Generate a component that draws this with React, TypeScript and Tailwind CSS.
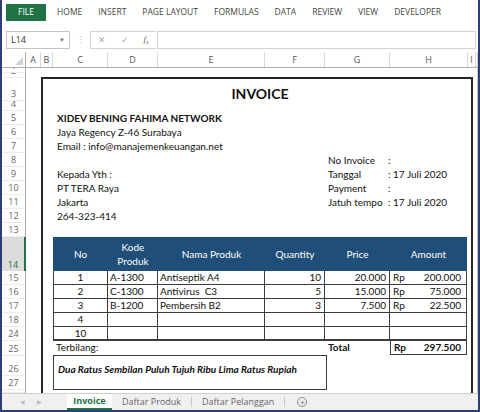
import React from 'react';

const ui = "font-['Open_Sans',sans-serif]";
const cal = "font-['Lato',sans-serif]";

const ribbonTabs = ['HOME', 'INSERT', 'PAGE LAYOUT', 'FORMULAS', 'DATA', 'REVIEW', 'VIEW', 'DEVELOPER'];

const colHeads = [
  { n: 'A', cls: 'w-[15px]' },
  { n: 'B', cls: 'w-[12px]' },
  { n: 'C', cls: 'w-[55px]' },
  { n: 'D', cls: 'w-[50px]' },
  { n: 'E', cls: 'w-[107px]' },
  { n: 'F', cls: 'w-[60px]' },
  { n: 'G', cls: 'w-[65px]' },
  { n: 'H', cls: 'w-[78px]' },
  { n: 'I', cls: 'w-[8px]' },
];

const rowHeads = [
  { n: '1', cls: 'h-[5px]' },
  { n: '2', cls: 'h-[5px]' },
  { n: '3', cls: 'h-[23px]' },
  { n: '4', cls: 'h-[10px]' },
  { n: '5', cls: 'h-[14px]' },
  { n: '6', cls: 'h-[14px]' },
  { n: '7', cls: 'h-[14px]' },
  { n: '8', cls: 'h-[14px]' },
  { n: '9', cls: 'h-[14px]' },
  { n: '10', cls: 'h-[14px]' },
  { n: '11', cls: 'h-[14px]' },
  { n: '12', cls: 'h-[14px]' },
  { n: '13', cls: 'h-[14px]' },
  { n: '14', cls: 'h-[34px]', active: true },
  { n: '15', cls: 'h-[14px]' },
  { n: '16', cls: 'h-[14px]' },
  { n: '17', cls: 'h-[14px]' },
  { n: '18', cls: 'h-[14px]' },
  { n: '24', cls: 'h-[14px]' },
  { n: '25', cls: 'h-[15px]' },
  { n: '26', cls: 'h-[20px]' },
  { n: '27', cls: 'h-[14px]' },
  { n: '28', cls: 'flex-1' },
];

const items = [
  { no: '1', kode: 'A-1300', nama: 'Antiseptik A4', qty: '10', price: '20.000', amount: '200.000' },
  { no: '2', kode: 'C-1300', nama: 'Antivirus  C3', qty: '5', price: '15.000', amount: '75.000' },
  { no: '3', kode: 'B-1200', nama: 'Pembersih B2', qty: '3', price: '7.500', amount: '22.500' },
  { no: '4', kode: '', nama: '', qty: '', price: '', amount: '' },
  { no: '10', kode: '', nama: '', qty: '', price: '', amount: '' },
];

function Ribbon() {
  return (
    <div className={`h-[25px] flex items-center pl-[4px] ${ui}`}>
      <div className="w-[40px] h-[17px] bg-[#217346] text-white text-[8.5px] flex items-center justify-center">FILE</div>
      <div className="flex items-center gap-[16px] ml-[11px] text-[8.5px] text-[#444]">
        {ribbonTabs.map((t) => (
          <span key={t}>{t}</span>
        ))}
      </div>
    </div>
  );
}

function FormulaBar() {
  return (
    <div className={`h-[27px] flex items-center pl-[4px] pr-[2px] pt-[3px] ${ui}`}>
      <div className="w-[64px] h-[18px] border border-[#c6c6c6] flex items-center justify-between px-[4px] text-[9px] text-[#333]">
        <span>L14</span>
        <span className="text-[6px] text-[#777]">▼</span>
      </div>
      <div className="w-[20px] flex justify-center text-[9px] text-[#bbb]">⋮</div>
      <div className="w-[66px] h-[18px] border border-r-0 border-[#d4d4d4] flex items-center justify-around text-[9px] text-[#aaa]">
        <span>✕</span>
        <span>✓</span>
        <span className="italic font-['Liberation_Serif',serif] text-[#666]">f<sub className="text-[6px]">x</sub></span>
      </div>
      <div className="flex-1 h-[18px] border border-[#d4d4d4] ml-[1px]"></div>
    </div>
  );
}

function RowHeaders() {
  return (
    <div className={`w-[24px] flex flex-col border-r border-[#ababab] ${ui}`}>
      <div className="h-[16px] border-b border-[#ababab] flex items-end justify-end pr-[2px] pb-[2px]">
        <div className="w-0 h-0 border-l-[8px] border-l-transparent border-b-[8px] border-b-[#d0d0d0]"></div>
      </div>
      {rowHeads.map((r) =>
        r.active ? (
          <div
            key={r.n}
            className={`${r.cls} bg-[#dcdcdc] border-r-2 border-[#217346] -mr-[1px] flex items-end justify-center pb-[1px] text-[9px] leading-[11px] text-[#217346] overflow-hidden`}
          >
            {r.n}
          </div>
        ) : (
          <div
            key={r.n}
            className={`${r.cls} flex items-end justify-center pb-[1px] text-[9px] leading-[11px] text-[#666] overflow-hidden border-b border-[#ececec]`}
          >
            {r.n}
          </div>
        ),
      )}
    </div>
  );
}

function ColHeaders() {
  return (
    <div className={`h-[16px] flex border-b border-[#ababab] ${ui}`}>
      {colHeads.map((c) => (
        <div
          key={c.n}
          className={`${c.cls} shrink-0 flex items-center justify-center text-[9px] text-[#555] border-r border-[#dadada]`}
        >
          {c.n}
        </div>
      ))}
    </div>
  );
}

function InfoRow({ left, label, value, bold }: { left?: string; label?: string; value?: string; bold?: boolean }) {
  return (
    <div className="h-[14px] flex items-center leading-[14px]">
      <div className={`w-[272px] pl-[4px] whitespace-nowrap ${bold ? 'font-bold' : ''}`}>{left}</div>
      <div className="w-[63px] pl-[3px] whitespace-nowrap">{label}</div>
      <div className="whitespace-pre">{value}</div>
    </div>
  );
}

function InvoiceTable() {
  const line = 'border-[#3c3c3c]';
  return (
    <div className="w-[414px]">
      <div className="h-[34px] bg-[#1f4e78] text-white flex items-center text-center leading-[14px]">
        <div className="w-[55px]">No</div>
        <div className="w-[50px]">
          Kode
          <br />
          Produk
        </div>
        <div className="w-[107px]">Nama Produk</div>
        <div className="w-[60px]">Quantity</div>
        <div className="w-[65px]">Price</div>
        <div className="w-[77px]">Amount</div>
      </div>
      {items.map((it, i) => (
        <div
          key={it.no}
          className={`h-[14px] flex leading-[13px] border-l border-r ${line} ${i === items.length - 1 ? 'border-b-2' : 'border-b'}`}
        >
          <div className={`w-[54px] text-center border-r ${line}`}>{it.no}</div>
          <div className={`w-[50px] pl-[2px] border-r ${line}`}>{it.kode}</div>
          <div className={`w-[107px] pl-[2px] whitespace-pre border-r ${line}`}>{it.nama}</div>
          <div className={`w-[60px] text-right pr-[3px] border-r ${line}`}>{it.qty}</div>
          <div className={`w-[65px] text-right pr-[3px] border-r ${line}`}>{it.price}</div>
          <div className="flex-1 flex justify-between pl-[3px] pr-[5px]">
            <span>{it.amount ? 'Rp' : ''}</span>
            <span>{it.amount}</span>
          </div>
        </div>
      ))}
      <div className="h-[14px] flex leading-[13px]">
        <div className="w-[272px] pl-[3px]">Terbilang:</div>
        <div className="w-[65px] pl-[3px] font-bold">Total</div>
        <div className={`flex-1 h-[14px] border-l border-r border-b ${line} flex justify-between pl-[3px] pr-[5px] font-bold`}>
          <span>Rp</span>
          <span>297.500</span>
        </div>
      </div>
      <div className={`w-[274px] h-[35px] border ${line} pt-[6px] pl-[4px] leading-[14px] font-bold italic whitespace-nowrap`}>
        Dua Ratus Sembilan Puluh Tujuh Ribu Lima Ratus Rupiah
      </div>
    </div>
  );
}

function Sheet() {
  return (
    <div className="h-[341px] flex">
      <RowHeaders />
      <div className="flex-1 flex flex-col border-r border-[#c8c8c8]">
        <ColHeaders />
        <div className="flex-1 overflow-hidden pt-[9px] pl-[15px]">
          <div className={`w-[432px] h-[330px] border-2 border-b-0 border-[#262626] pl-[10px] text-[10px] text-[#111] ${cal}`}>
            <div className="h-[22px] w-[414px] flex items-end justify-center">
              <span className="text-[14px] leading-[15px] font-bold">INVOICE</span>
            </div>
            <div className="h-[10px]"></div>
            <InfoRow left="XIDEV BENING FAHIMA NETWORK" bold />
            <InfoRow left="Jaya Regency Z-46 Surabaya" />
            <InfoRow left="Email : info@manajemenkeuangan.net" />
            <InfoRow label="No Invoice" value=":" />
            <InfoRow left="Kepada Yth :" label="Tanggal" value=": 17 Juli 2020" />
            <InfoRow left="PT TERA Raya" label="Payment" value=":" />
            <InfoRow left="Jakarta" label="Jatuh tempo" value=": 17 Juli 2020" />
            <InfoRow left="264-323-414" />
            <div className="h-[14px]"></div>
            <InvoiceTable />
          </div>
        </div>
      </div>
    </div>
  );
}

function SheetTabs() {
  return (
    <div className={`flex-1 flex items-stretch bg-[#f0f0f0] border-t border-[#d0d0d0] text-[9px] text-[#666] ${ui}`}>
      <div className="w-[65px] flex items-center pl-[18px] gap-[12px] text-[6px] text-[#bbb]">
        <span>◀</span>
        <span>▶</span>
      </div>
      <div className="w-[45px] bg-white border-b-2 border-[#217346] flex items-center justify-center font-bold text-[#217346]">
        Invoice
      </div>
      <div className="flex items-center">
        <span className="px-[10px]">Daftar Produk</span>
        <span className="w-px h-[10px] bg-[#c8c8c8]"></span>
        <span className="px-[10px]">Daftar Pelanggan</span>
        <span className="w-px h-[10px] bg-[#c8c8c8]"></span>
        <span className="ml-[12px] w-[10px] h-[10px] rounded-full border border-[#888] flex items-center justify-center text-[9px] leading-none text-[#777]">
          +
        </span>
      </div>
    </div>
  );
}

export default function App() {
  return (
    <div className="w-[480px] h-[412px] bg-white border-x-2 border-b-2 border-[#2b3f75] overflow-hidden flex flex-col">
      <Ribbon />
      <FormulaBar />
      <Sheet />
      <SheetTabs />
    </div>
  );
}
